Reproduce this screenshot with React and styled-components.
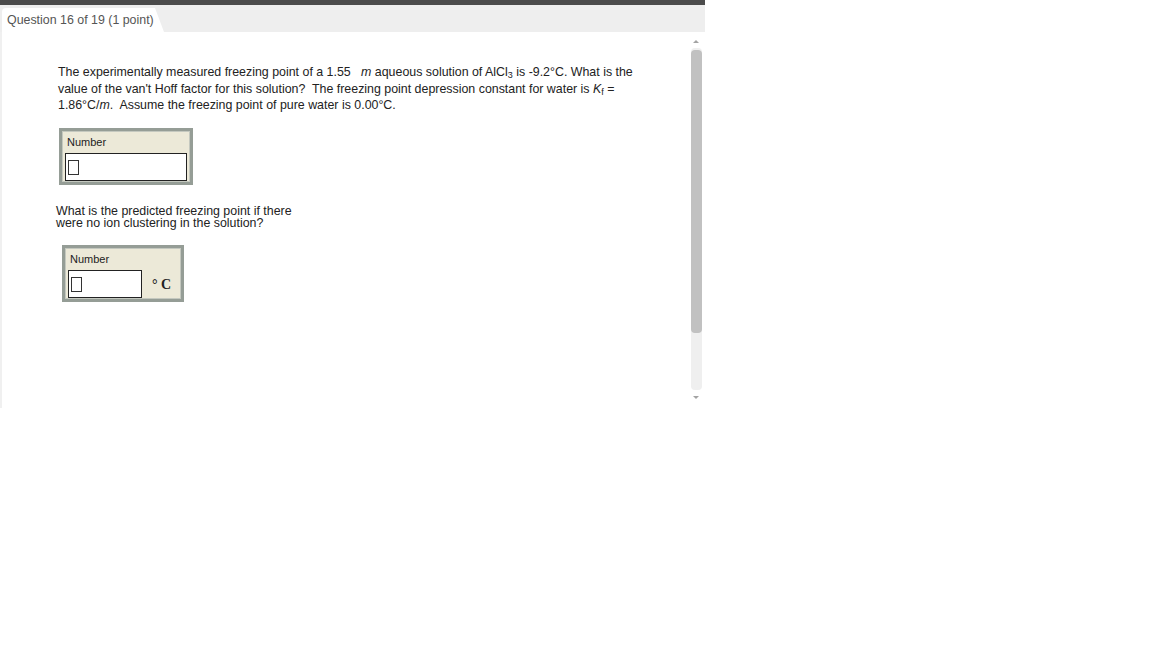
import styled, { createGlobalStyle } from "styled-components";

const Global = createGlobalStyle`
  html, body {
    margin: 0;
    padding: 0;
    background: #fff;
  }
  body {
    font-family: "Liberation Sans", Arial, sans-serif;
  }
`;

const Frame = styled.div`
  width: 705px;
  display: flex;
  flex-direction: column;
`;

const TopBar = styled.div`
  height: 5px;
  background: #4b4b4b;
`;

const TabStrip = styled.div`
  height: 27px;
  background: #eeeeee;
  display: flex;
  align-items: flex-end;
  padding-left: 2px;
`;

const Tab = styled.div`
  position: relative;
  height: 24px;
  width: 153px;
  background: #fff;
  border-top-left-radius: 4px;
  display: flex;
  align-items: center;
  padding-left: 5px;
  box-sizing: border-box;
  font-size: 12.4px;
  color: #555;
  white-space: nowrap;

  &::after {
    content: "";
    position: absolute;
    top: 0;
    left: 100%;
    width: 9px;
    height: 100%;
    background: #fff;
    clip-path: polygon(0 0, 0 100%, 100% 100%);
  }

  span {
    position: relative;
    z-index: 1;
  }
`;

const Body = styled.div`
  height: 376px;
  display: flex;
  border-left: 2px solid #f0f0f0;
`;

const Content = styled.div`
  flex: 1;
  padding: 32px 0 0 56px;
  color: #222;
`;

const Para = styled.p`
  margin: 0;
  font-size: 12.4px;
  line-height: 16.5px;
  white-space: nowrap;

  sub {
    font-size: 9px;
    vertical-align: -2px;
    line-height: 0;
  }
`;

const Question = styled.p`
  margin: 20px 0 0 -2px;
  font-size: 12.4px;
  line-height: 12px;
  white-space: nowrap;
`;

const AnswerBox = styled.div`
  margin-top: ${(p) => p.$top}px;
  margin-left: ${(p) => p.$left}px;
  width: ${(p) => p.$width}px;
  box-sizing: border-box;
  background: #ece9d8;
  border: 3px solid #959d96;
  box-shadow: inset 0 0 0 1px #c4c8bf;
  padding: 5px 3px 1px 3px;
`;

const Label = styled.div`
  font-size: 11px;
  color: #222;
  line-height: 13px;
  margin-left: 2px;
  margin-bottom: 4px;
`;

const Row = styled.div`
  display: flex;
  align-items: center;
`;

const Field = styled.div`
  width: ${(p) => p.$width}px;
  height: 28px;
  box-sizing: border-box;
  border: 1px solid #222;
  background: #fff;
  display: flex;
  align-items: center;
  padding-left: 2px;
`;

const Caret = styled.span`
  width: 11px;
  height: 15px;
  box-sizing: border-box;
  border: 1px solid #333;
  margin-top: 1px;
`;

const Unit = styled.span`
  font-family: "Liberation Serif", "Times New Roman", serif;
  font-weight: bold;
  font-size: 14px;
  color: #222;
  margin-left: 10px;
  margin-top: 2px;
`;

const ScrollCol = styled.div`
  width: 12px;
  margin-right: 3px;
  display: flex;
  flex-direction: column;
  align-items: center;
  padding-top: 8px;
`;

const Arrow = styled.div`
  width: 0;
  height: 0;
  border-left: 3px solid transparent;
  border-right: 3px solid transparent;
  ${(p) =>
    p.$down
      ? "border-top: 3px solid #a3a3a3; margin-top: 6px;"
      : "border-bottom: 3px solid #a3a3a3; margin-bottom: 5px;"}
`;

const Track = styled.div`
  width: 11px;
  height: 342px;
  border-radius: 4px;
  background: #efefef;
  display: flex;
  flex-direction: column;
  padding-top: 2px;
  box-sizing: border-box;
`;

const Thumb = styled.div`
  height: 283px;
  border-radius: 4px;
  background: #c1c1c1;
`;

export default function App() {
  return (
    <>
      <Global />
      <Frame>
        <TopBar />
        <TabStrip>
          <Tab>
            <span>Question 16 of 19 (1 point)</span>
          </Tab>
        </TabStrip>
        <Body>
          <Content>
            <Para>
              The experimentally measured freezing point of a 1.55&nbsp;&nbsp; <i>m</i> aqueous
              solution of AlCl<sub>3</sub> is -9.2°C. What is the
              <br />
              value of the van't Hoff factor for this solution?&nbsp; The freezing point
              depression constant for water is <i>K</i>
              <sub>f</sub> =
              <br />
              1.86°C/<i>m</i>.&nbsp; Assume the freezing point of pure water is 0.00°C.
            </Para>
            <AnswerBox $top={14} $left={1} $width={134}>
              <Label>Number</Label>
              <Field $width={122}>
                <Caret />
              </Field>
            </AnswerBox>
            <Question>
              What is the predicted freezing point if there
              <br />
              were no ion clustering in the solution?
            </Question>
            <AnswerBox $top={16} $left={4} $width={122}>
              <Label>Number</Label>
              <Row>
                <Field $width={74}>
                  <Caret />
                </Field>
                <Unit>° C</Unit>
              </Row>
            </AnswerBox>
          </Content>
          <ScrollCol>
            <Arrow />
            <Track>
              <Thumb />
            </Track>
            <Arrow $down />
          </ScrollCol>
        </Body>
      </Frame>
    </>
  );
}
